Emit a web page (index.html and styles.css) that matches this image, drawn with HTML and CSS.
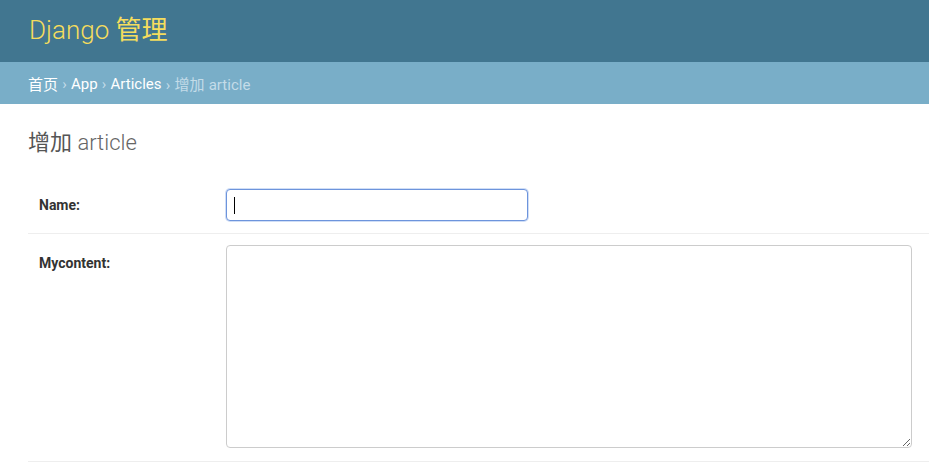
FILE: index.html
```html
<!DOCTYPE html>
<html lang="zh">
<head>
<meta charset="utf-8">
<title>增加 article | Django 站点管理员</title>
<link rel="stylesheet" href="styles.css">
</head>
<body>
<div class="header">
  <h1 class="branding">Django <span class="cjk">管理</span></h1>
</div>
<div class="breadcrumbs">
  <a href="#">首页</a> › <a href="#">App</a> › <a href="#">Articles</a> › 增加 article
</div>
<div class="content">
  <h1 class="title"><span class="cjk">增加</span> article</h1>
  <form class="form">
    <div class="form-row row-name">
      <label class="label" for="id_name">Name:</label>
      <div class="field-wrap">
        <input class="text-input" type="text" id="id_name" autofocus>
        <span class="caret"></span>
      </div>
    </div>
    <div class="form-row row-content">
      <label class="label" for="id_mycontent">Mycontent:</label>
      <textarea class="text-area" id="id_mycontent"></textarea>
    </div>
  </form>
</div>
</body>
</html>
```
FILE: styles.css
```css
html, body {
  margin: 0;
  padding: 0;
  background: #fff;
  font-family: Roboto, "Noto Sans CJK SC", "Liberation Sans", sans-serif;
  color: #333;
}
.header {
  background: #417690;
  height: 62px;
  display: flex;
  align-items: center;
  padding: 0 28px;
  box-sizing: border-box;
}
.branding {
  margin: 0 0 3px 1px;
  font-size: 26px;
  font-weight: 300;
  color: #f5dd5d;
  line-height: 32px;
}
.branding .cjk {
  font-weight: 400;
}
.breadcrumbs {
  background: #79aec8;
  height: 42px;
  box-sizing: border-box;
  padding: 1px 28px 0;
  display: flex;
  align-items: center;
  font-size: 15px;
  color: #c4dce8;
  white-space: pre;
  word-spacing: 0.5px;
}
.breadcrumbs a {
  color: #fff;
  text-decoration: none;
}
.content {
  padding: 20px 0 0 28px;
}
.title {
  margin: 0;
  font-size: 22px;
  font-weight: 300;
  color: #666;
  line-height: 38px;
}
.title .cjk {
  font-weight: 400;
  color: #555;
}
.form {
  margin-top: 17px;
}
.form-row {
  display: flex;
  align-items: flex-start;
  border-bottom: 1px solid #eee;
}
.row-name {
  padding: 10px 0 12px;
}
.row-content {
  padding: 11px 0 13px;
}
.label {
  width: 187px;
  padding-left: 11px;
  font-size: 14px;
  font-weight: bold;
  color: #333;
  flex: none;
}
.row-name .label {
  padding-top: 8px;
}
.row-content .label {
  padding-top: 10px;
}
.field-wrap {
  position: relative;
}
.text-input {
  display: block;
  width: 302px;
  height: 32px;
  box-sizing: border-box;
  border: 1px solid #6d94dc;
  box-shadow: 0 0 0 1px rgba(120, 160, 230, 0.35);
  border-radius: 4px;
  outline: none;
  padding: 2px 8px;
  font-size: 13px;
  font-family: Roboto, sans-serif;
  caret-color: transparent;
}
.caret {
  position: absolute;
  left: 8px;
  top: 8px;
  width: 1px;
  height: 17px;
  background: #000;
}
.text-area {
  display: block;
  width: 686px;
  height: 203px;
  box-sizing: border-box;
  border: 1px solid #ccc;
  border-radius: 4px;
  padding: 5px 6px;
  font-family: Roboto, sans-serif;
  font-size: 13px;
  outline: none;
}
```
